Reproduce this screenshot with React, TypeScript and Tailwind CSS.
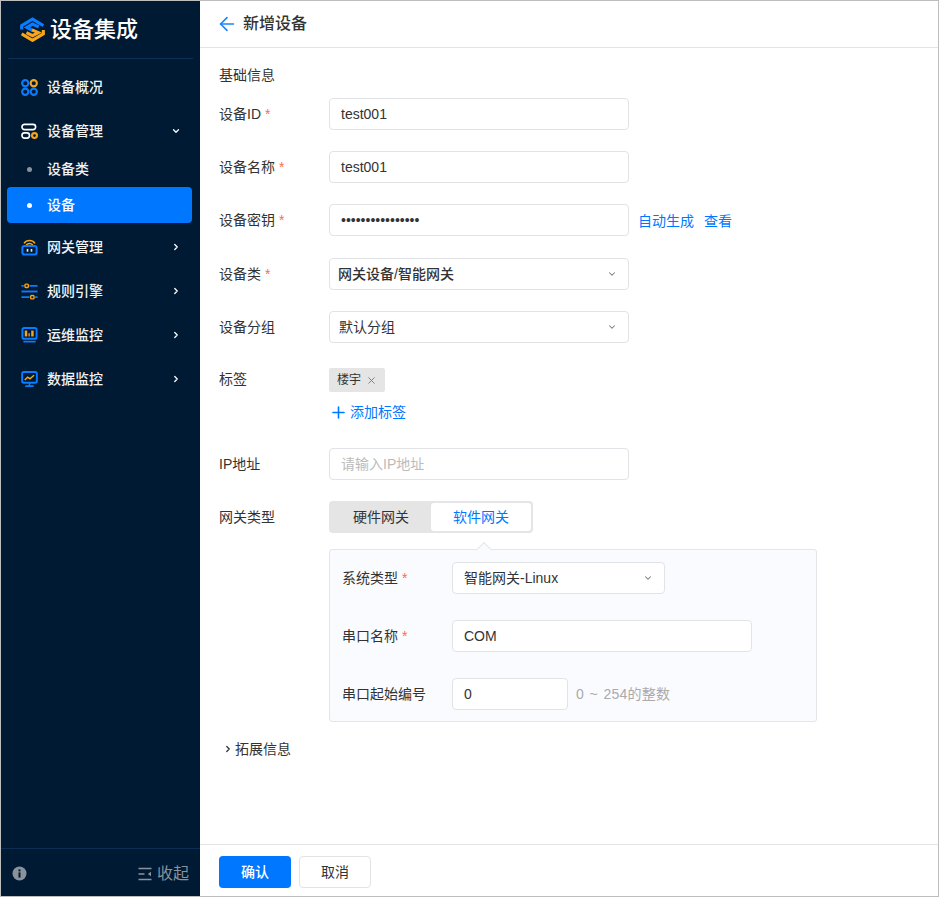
import { ArrowLeft, ChevronDown, ChevronRight, Plus, X } from 'lucide-react';
import type { ReactNode } from 'react';

const font = 'font-["Liberation_Sans","Noto_Sans_CJK_SC",sans-serif]';

function LogoIcon() {
  return (
    <svg width="25" height="25" viewBox="0 0 24 24" fill="none" strokeWidth="3">
      <path d="M22.4 8.2 L12 2 L1.6 8.2 V12" stroke="#0a7cff" />
      <path d="M1.6 16.2 L12 22.4 L22.4 16.2 V12.4" stroke="#f9a51a" />
      <path d="M18 9.6 L12 6.8 L6.6 10 L12.6 13.2" stroke="#0a7cff" />
      <path d="M11.6 12.4 L17.6 15 L12 18 L6.2 15" stroke="#f9a51a" />
    </svg>
  );
}

function OverviewIcon() {
  return (
    <svg width="17" height="17" viewBox="0 0 18 18" fill="none" strokeWidth="2.2">
      <circle cx="4.5" cy="4.5" r="3.3" stroke="#0a7cff" />
      <circle cx="13.5" cy="4.5" r="3.3" stroke="#f9a51a" />
      <circle cx="4.5" cy="13.5" r="3.3" stroke="#0a7cff" />
      <circle cx="13.5" cy="13.5" r="3.3" stroke="#0a7cff" />
    </svg>
  );
}

function DeviceIcon() {
  return (
    <svg width="17" height="17" viewBox="0 0 18 18" fill="none" strokeWidth="1.7">
      <rect x="1" y="1.5" width="14.5" height="5.5" rx="2.7" stroke="#ffffff" />
      <rect x="1" y="10.5" width="8" height="5.5" rx="2.7" stroke="#ffffff" />
      <circle cx="14.3" cy="13.3" r="2.6" stroke="#f9a51a" strokeWidth="2.2" />
    </svg>
  );
}

function GatewayIcon() {
  return (
    <svg width="17" height="17" viewBox="0 0 18 18" fill="none">
      <path d="M3.2 4.6 C6 0.6 12 0.6 14.8 4.6" stroke="#f9a51a" strokeWidth="1.7" />
      <path d="M5.5 6.2 C7.5 4.6 10.5 4.6 12.5 6.2" stroke="#f9a51a" strokeWidth="1.5" />
      <rect x="1.5" y="7.5" width="15" height="9" rx="2.2" stroke="#0a7cff" strokeWidth="2.2" />
      <rect x="6" y="10.5" width="1.8" height="3" fill="#cfe3ff" />
      <rect x="10.2" y="10.5" width="1.8" height="3" fill="#cfe3ff" />
    </svg>
  );
}

function RuleIcon() {
  return (
    <svg width="17" height="17" viewBox="0 0 18 18" fill="none" strokeWidth="2" stroke="#0a7cff">
      <path d="M0.5 3 H3 M9 3 H17.5" />
      <path d="M0.5 9 H17.5" />
      <path d="M0.5 15 H9 M15 15 H17.5" />
      <rect x="4.2" y="1.2" width="3.6" height="3.6" rx="1" stroke="#f9a51a" strokeWidth="1.5" />
      <rect x="10.2" y="13.2" width="3.6" height="3.6" rx="1" stroke="#f9a51a" strokeWidth="1.5" />
    </svg>
  );
}

function OpsIcon() {
  return (
    <svg width="17" height="17" viewBox="0 0 18 18" fill="none">
      <rect x="1.5" y="1" width="15" height="11.5" rx="2" stroke="#0a7cff" strokeWidth="2" />
      <rect x="4" y="3.8" width="2.6" height="6.2" fill="#f9a51a" />
      <rect x="7.9" y="6.5" width="1.4" height="3.5" fill="#f9a51a" />
      <rect x="10.8" y="3.8" width="2.6" height="6.2" fill="#f9a51a" />
      <path d="M2.5 15.5 H15.5" stroke="#0a7cff" strokeWidth="1.8" />
    </svg>
  );
}

function DataIcon() {
  return (
    <svg width="17" height="17" viewBox="0 0 18 18" fill="none">
      <rect x="1.2" y="1" width="15.6" height="11.5" rx="1.8" stroke="#0a7cff" strokeWidth="2" />
      <path d="M4 9.5 L7 6.5 L9.5 8.2 L13.8 4.5" stroke="#f9a51a" strokeWidth="1.6" />
      <path d="M9 12.5 V15.5 M4.5 16 H13.5" stroke="#0a7cff" strokeWidth="1.7" />
    </svg>
  );
}

function CollapseIcon() {
  return (
    <svg width="14" height="14" viewBox="0 0 14 14" fill="none" stroke="#8a929c" strokeWidth="1.3">
      <path d="M0.5 1.5 H13.5 M0.5 7 H6.5 M0.5 12.5 H13.5" />
      <path d="M13 4.7 L9.8 7 L13 9.3 Z" fill="#8a929c" stroke="none" />
    </svg>
  );
}

function NavItem({
  icon,
  label,
  arrow,
  className,
}: {
  icon: ReactNode;
  label: string;
  arrow?: 'down' | 'right';
  className: string;
}) {
  return (
    <div className={`flex items-center pl-[19px] pr-[19px] text-[14px] font-medium text-[#f1f3f5] ${className}`}>
      <span className="w-[27px] shrink-0 flex items-center pl-[1px]">{icon}</span>
      <span className="flex-1">{label}</span>
      {arrow === 'down' && <ChevronDown size={10} strokeWidth={3} className="text-white" />}
      {arrow === 'right' && <ChevronRight size={10} strokeWidth={3} className="text-white" />}
    </div>
  );
}

function Sidebar() {
  return (
    <aside className="w-[199px] shrink-0 bg-[#001a33] flex flex-col">
      <div className="mx-[7px] h-[58px] border-b border-[#0b2e52] flex items-center pl-[12px] gap-[5px]">
        <LogoIcon />
        <span className="text-[22px] font-medium text-white leading-none">设备集成</span>
      </div>
      <NavItem icon={<OverviewIcon />} label="设备概况" className="h-11 mt-[6px]" />
      <NavItem icon={<DeviceIcon />} label="设备管理" arrow="down" className="h-11" />
      <div className="flex items-center h-8 pl-[26px] text-[14px] font-medium text-[#f1f3f5]">
        <span className="size-[5px] rounded-full bg-[#8a929c] mr-[15px]" />
        设备类
      </div>
      <div className="flex items-center h-9 ml-[6px] mr-[8px] mt-[2px] pl-[20px] text-[14px] font-medium text-white bg-[#0077ff] rounded-[4px]">
        <span className="size-[5px] rounded-full bg-white mr-[15px]" />
        设备
      </div>
      <NavItem icon={<GatewayIcon />} label="网关管理" arrow="right" className="h-11 mt-[2px]" />
      <NavItem icon={<RuleIcon />} label="规则引擎" arrow="right" className="h-11" />
      <NavItem icon={<OpsIcon />} label="运维监控" arrow="right" className="h-11" />
      <NavItem icon={<DataIcon />} label="数据监控" arrow="right" className="h-11" />
      <div className="mt-auto h-[48px] border-t border-[#0b2e52] flex items-center justify-between pt-[2px] pl-[11px] pr-[11px]">
        <svg width="15" height="15" viewBox="0 0 15 15">
          <circle cx="7.5" cy="7.5" r="7" fill="#8a929c" />
          <rect x="6.5" y="6.4" width="2" height="5.2" fill="#001a33" />
          <rect x="6.5" y="3.4" width="2" height="2" fill="#001a33" />
        </svg>
        <span className="flex items-center gap-[5px] text-[16px] text-[#8a929c]">
          <CollapseIcon />
          收起
        </span>
      </div>
    </aside>
  );
}

function Field({
  label,
  required,
  children,
  className,
}: {
  label: string;
  required?: boolean;
  children: ReactNode;
  className?: string;
}) {
  return (
    <div className={`flex items-center ${className ?? ''}`}>
      <label className="w-[110px] shrink-0 text-[14px] text-[#333]">
        {label}
        {required && <span className="ml-[4px] text-[#ff6a4d]">*</span>}
      </label>
      {children}
    </div>
  );
}

function Box({ children, className }: { children?: ReactNode; className?: string }) {
  return (
    <div className={`h-8 border border-[#e1e3e6] bg-white rounded-[4px] flex items-center text-[14px] text-[#333] ${className ?? ''}`}>
      {children}
    </div>
  );
}

function SelectBox({ value, className }: { value: string; className: string }) {
  return (
    <Box className={`justify-between pr-[11px] ${className}`}>
      <span>{value}</span>
      <ChevronDown size={10} strokeWidth={2.5} className="text-[#777]" />
    </Box>
  );
}

export default function App() {
  return (
    <div className={`w-[939px] h-[897px] border border-[#bdbdbd] flex overflow-hidden bg-white ${font}`}>
      <Sidebar />
      <main className="flex-1 min-w-0 flex flex-col">
        <header className="h-[47px] shrink-0 border-b border-[#e4e4e4] flex items-center pl-[16px] gap-[5px]">
          <ArrowLeft size={22} strokeWidth={1.8} className="text-[#1a85ff]" />
          <h1 className="text-[16px] font-medium text-[#333]">新增设备</h1>
        </header>

        <div className="flex-1 pl-[19px] pt-[17px]">
          <div className="text-[14px] leading-[20px] text-[#333] mb-[13px]">基础信息</div>

          <Field label="设备ID" required>
            <Box className="w-[300px] px-[11px]">test001</Box>
          </Field>
          <Field label="设备名称" required className="mt-[21px]">
            <Box className="w-[300px] px-[11px]">test001</Box>
          </Field>
          <Field label="设备密钥" required className="mt-[21px]">
            <Box className="w-[300px] px-[11px] text-[11px]">••••••••••••••••</Box>
            <a className="ml-[9px] mt-[3px] text-[14px] text-[#0077ff]">自动生成</a>
            <a className="ml-[10px] mt-[3px] text-[14px] text-[#0077ff]">查看</a>
          </Field>
          <Field label="设备类" required className="mt-[22px]">
            <SelectBox value="网关设备/智能网关" className="w-[300px] pl-[8px] font-medium" />
          </Field>
          <Field label="设备分组" className="mt-[21px]">
            <SelectBox value="默认分组" className="w-[300px] pl-[9px]" />
          </Field>

          <div className="flex mt-[24px]">
            <div className="w-[110px] shrink-0 text-[14px] leading-[24px] text-[#333]">标签</div>
            <div>
              <span className="inline-flex items-center h-6 px-2 rounded-[2px] bg-[#e5e5e5] text-[12px] text-[#333] gap-[5px]">
                楼宇
                <X size={11} strokeWidth={2} className="text-[#777]" />
              </span>
              <div className="flex items-center mt-[8px] gap-[2px] text-[14px] leading-[24px] text-[#0077ff]">
                <Plus size={19} strokeWidth={2} />
                添加标签
              </div>
            </div>
          </div>

          <Field label="IP地址" className="mt-[24px]">
            <Box className="w-[300px] px-[11px] text-[#bbbbbb]">请输入IP地址</Box>
          </Field>

          <Field label="网关类型" className="mt-[21px]">
            <div className="flex h-8 w-[204px] p-[2px] rounded-[4px] bg-[#e5e5e5] text-[14px]">
              <div className="w-[100px] flex items-center justify-center text-[#333]">硬件网关</div>
              <div className="flex-1 flex items-center justify-center bg-white rounded-[3px] text-[#0077ff]">软件网关</div>
            </div>
          </Field>

          <div className="relative ml-[110px] mt-4 w-[488px] h-[173px] border border-[#e4e5e8] rounded-[3px] bg-[#fafbff] pt-[12px] pl-[12px]">
            <span className="absolute -top-[6px] left-[149px] size-[10px] rotate-45 border-l border-t border-[#e4e5e8] bg-[#fafbff]" />
            <div className="flex flex-col gap-[26px]">
              <Field label="系统类型" required>
                <SelectBox value="智能网关-Linux" className="w-[213px] pl-[11px]" />
              </Field>
              <Field label="串口名称" required>
                <Box className="w-[300px] px-[11px]">COM</Box>
              </Field>
              <Field label="串口起始编号">
                <Box className="w-[116px] px-[11px]">0</Box>
                <span className="ml-2 text-[14px] text-[#aaaaaa] [word-spacing:1.5px] tracking-[0.2px]">0 ~ 254的整数</span>
              </Field>
            </div>
          </div>

          <div className="flex items-center mt-[17px] ml-[4px] gap-[2px] text-[14px] leading-[20px] text-[#333]">
            <ChevronRight size={10} strokeWidth={3} />
            拓展信息
          </div>
        </div>

        <footer className="h-[52px] shrink-0 border-t border-[#e4e4e4] flex items-start pt-[11px] pl-[19px] gap-2 text-[14px]">
          <button className="w-[72px] h-8 rounded-[4px] bg-[#0077ff] text-white font-medium">确认</button>
          <button className="w-[72px] h-8 rounded-[4px] border border-[#e1e3e6] text-[#333]">取消</button>
        </footer>
      </main>
    </div>
  );
}
